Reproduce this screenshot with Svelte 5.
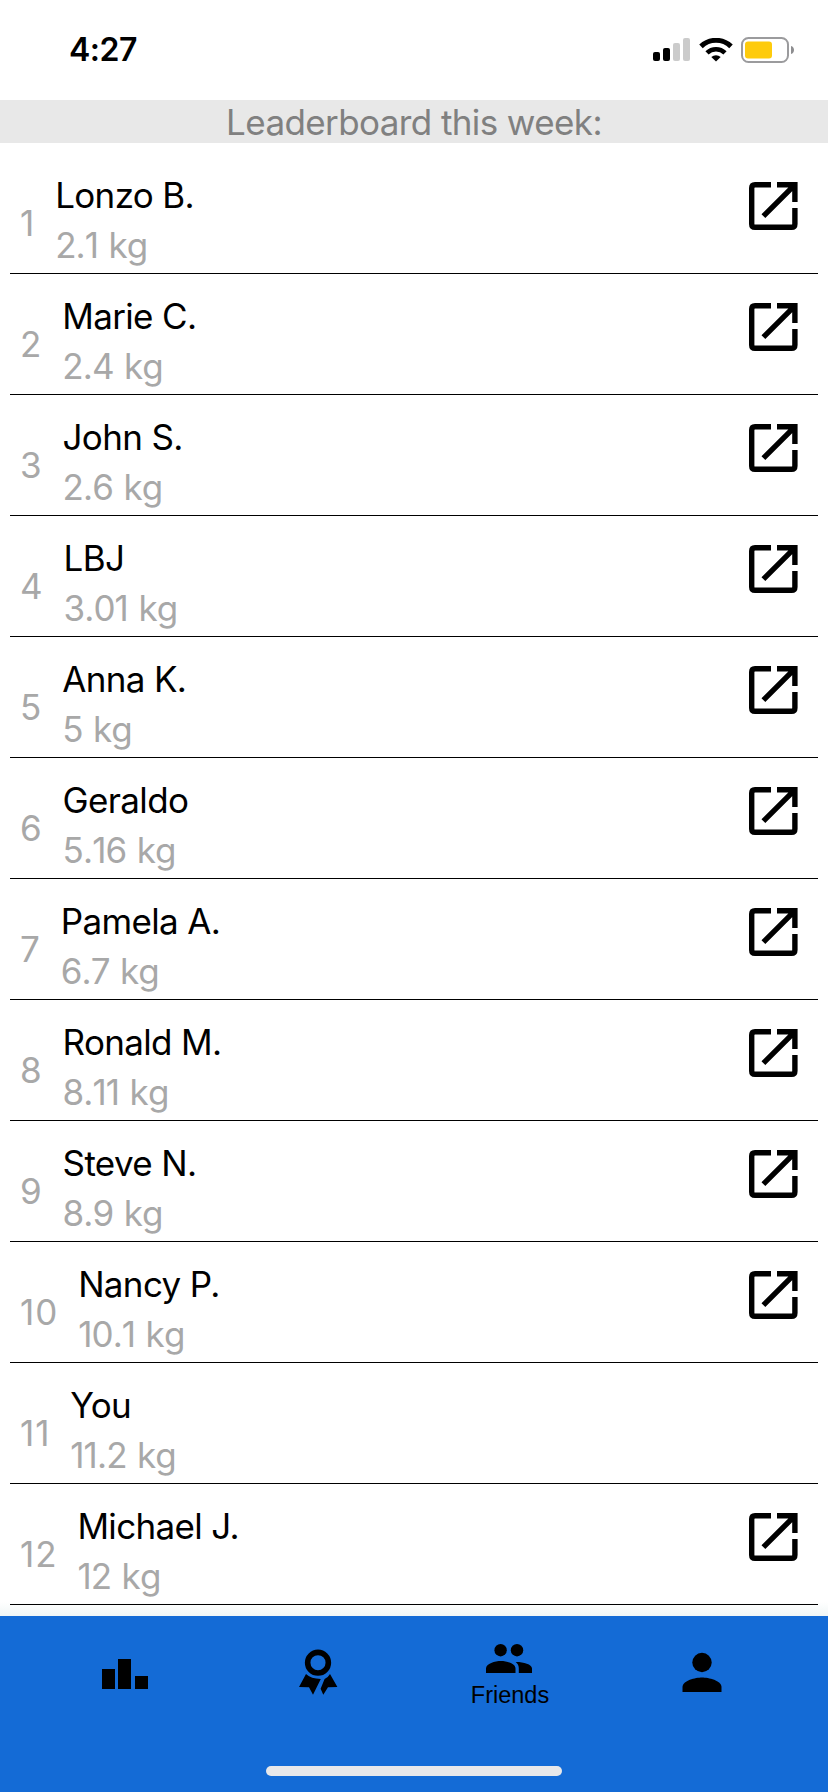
<script lang="ts">
  type Entry = { name: string; amount: string; link?: boolean };

  const entries: Entry[] = [
    { name: 'Lonzo B.', amount: '2.1 kg' },
    { name: 'Marie C.', amount: '2.4 kg' },
    { name: 'John S.', amount: '2.6 kg' },
    { name: 'LBJ', amount: '3.01 kg' },
    { name: 'Anna K.', amount: '5 kg' },
    { name: 'Geraldo', amount: '5.16 kg' },
    { name: 'Pamela A.', amount: '6.7 kg' },
    { name: 'Ronald M.', amount: '8.11 kg' },
    { name: 'Steve N.', amount: '8.9 kg' },
    { name: 'Nancy P.', amount: '10.1 kg' },
    { name: 'You', amount: '11.2 kg', link: false },
    { name: 'Michael J.', amount: '12 kg' },
  ];
</script>

<div class="screen">
  <header class="status-bar">
    <span class="time">4:27</span>
    <div class="status-icons">
      <svg width="38" height="24" viewBox="0 0 38 24">
        <rect x="0" y="14" width="7" height="9" rx="2" />
        <rect x="10" y="10" width="7" height="13" rx="2" />
        <rect class="dim" x="20" y="5" width="7" height="18" rx="2" />
        <rect class="dim" x="30" y="0" width="7" height="23" rx="2" />
      </svg>
      <svg class="wifi" width="34" height="24" viewBox="0 0 34 24">
        <path d="M2 8.4a21.5 21.5 0 0 1 30 0" fill="none" stroke="currentColor" stroke-width="5" />
        <path d="M8 14.8a13 13 0 0 1 18 0" fill="none" stroke="currentColor" stroke-width="4.6" />
        <path d="M12.3 19a7 7 0 0 1 9.4 0L17 23.6z" />
      </svg>
      <svg class="battery" width="54" height="26" viewBox="0 0 54 26">
        <rect x="1" y="1" width="46" height="24" rx="6.5" fill="none" stroke="#9b9b9d" stroke-width="2" />
        <rect x="4" y="4.5" width="27" height="17" rx="3" fill="#fecb0c" />
        <path d="M50 9c4 1 4 7 0 8z" fill="#8e8e90" />
      </svg>
    </div>
  </header>

  <h1 class="title">Leaderboard this week:</h1>

  <ol class="list">
    {#each entries as entry, i}
      <li class="row">
        <span class="rank">{i + 1}</span>
        <div class="info">
          <span class="name">{entry.name}</span>
          <span class="amount">{entry.amount}</span>
        </div>
        {#if entry.link !== false}
          <button class="open" aria-label="Open profile">
            <svg width="49" height="48" viewBox="0 0 49 48" fill="none" stroke="currentColor" stroke-width="5.4">
              <path d="M22 2.7H6Q2.7 2.7 2.7 6v36Q2.7 45.3 6 45.3h36.6Q45.9 45.3 45.9 42V26" />
              <path d="M28 2.7h17.9V20M45 3.6L14.4 34.2" />
            </svg>
          </button>
        {/if}
      </li>
    {/each}
  </ol>

  <nav class="tabs">
    <button class="tab" aria-label="Leaderboard">
      <svg width="48" height="60" viewBox="0 0 48 60">
        <path d="M0 25h13v20H0zM16 15h13v30H16zM33 32h13v13H33z" />
      </svg>
    </button>
    <button class="tab" aria-label="Awards">
      <svg width="40" height="60" viewBox="0 0 40 60">
        <circle cx="20" cy="18.7" r="10.35" fill="none" stroke="currentColor" stroke-width="5.6" />
        <path d="M8 30Q13 34.8 22.8 35L15 50.8l-4-7.5L1 43zM32 30l7.4 13-9.4.3-4.7 7.5-2.7-6L26.6 35Q30 33.6 32 30z" />
      </svg>
    </button>
    <button class="tab">
      <svg width="48" height="30" viewBox="0 0 48 30">
        <circle cx="14.6" cy="6.2" r="6.2" />
        <circle cx="31" cy="6.2" r="6.2" />
        <path d="M0 29v-4.5C0 19.5 9 17 15 17s14.5 2.5 14.5 7.5V29zM32.8 29v-5c0-2.8-1.3-4.7-3.1-6.1C36.5 17.7 46 20 46 24.5V29z" />
      </svg>
      <span>Friends</span>
    </button>
    <button class="tab" aria-label="Profile">
      <svg width="40" height="60" viewBox="0 0 40 60">
        <circle cx="20" cy="18.5" r="9.7" />
        <path d="M.5 48v-5C.5 36.5 13.5 33.4 20 33.4S39.5 36.5 39.5 43v5z" />
      </svg>
    </button>
    <div class="home-indicator"></div>
  </nav>
</div>

<style>
  :global(body) {
    margin: 0;
    background: #fff;
  }
  .screen {
    width: 828px;
    height: 1792px;
    display: flex;
    flex-direction: column;
    overflow: hidden;
    font-family: Inter, Roboto, sans-serif;
    font-size: 35px;
    color: #000;
  }
  svg {
    display: block;
    fill: currentColor;
    flex-shrink: 0;
  }
  svg[fill='none'] {
    fill: none;
  }
  button {
    padding: 0;
    border: none;
    background: none;
    color: inherit;
    font: inherit;
  }
  .status-bar {
    box-sizing: border-box;
    height: 100px;
    padding: 0 33px 0 69px;
    display: flex;
    align-items: center;
    justify-content: space-between;
  }
  .time {
    padding-bottom: 1px;
    font-size: 32px;
    font-weight: 600;
    letter-spacing: -0.5px;
  }
  .status-icons {
    display: flex;
    align-items: center;
  }
  .dim {
    fill: #cbcbcb;
  }
  .wifi {
    margin-left: 8px;
  }
  .battery {
    margin-left: 8px;
  }
  .title {
    margin: 0;
    height: 43px;
    line-height: 44px;
    background: #e8e8e8;
    color: #808080;
    font-size: 35px;
    font-weight: 400;
    letter-spacing: -0.6px;
    text-align: center;
  }
  .list {
    flex: 1;
    margin: 0;
    padding: 10px 10px 0;
    list-style: none;
    background: linear-gradient(#fff calc(100% - 14px), #f0f6f6);
  }
  .row {
    box-sizing: border-box;
    height: 121px;
    padding-left: 10px;
    padding-right: 20px;
    border-bottom: 1px solid #000;
    display: flex;
    align-items: flex-start;
  }
  .rank {
    margin-right: 20px;
    padding-top: 45px;
    line-height: 50px;
    letter-spacing: 0.9px;
    font-kerning: none;
    color: #a8a8a8;
  }
  .info {
    display: flex;
    flex-direction: column;
    padding-top: 17px;
    line-height: 50px;
    letter-spacing: -0.65px;
  }
  .amount {
    letter-spacing: -0.9px;
    word-spacing: 1.5px;
    font-kerning: none;
    color: #a8a8a8;
  }
  .open {
    margin: 29px 0 0 auto;
  }
  .tabs {
    position: relative;
    box-sizing: border-box;
    height: 176px;
    padding: 28px 30px 0;
    display: flex;
    background: #146bd6;
  }
  .tab {
    flex: 1;
    height: 60px;
    display: flex;
    flex-direction: column;
    align-items: center;
    font-family: 'Liberation Sans', Arial, sans-serif;
    font-size: 23.5px;
    line-height: 26px;
  }
  .tab span {
    margin-top: 8px;
  }
  .home-indicator {
    position: absolute;
    left: 266px;
    bottom: 16px;
    width: 296px;
    height: 10px;
    border-radius: 5px;
    background: #e8e8ea;
  }
</style>
